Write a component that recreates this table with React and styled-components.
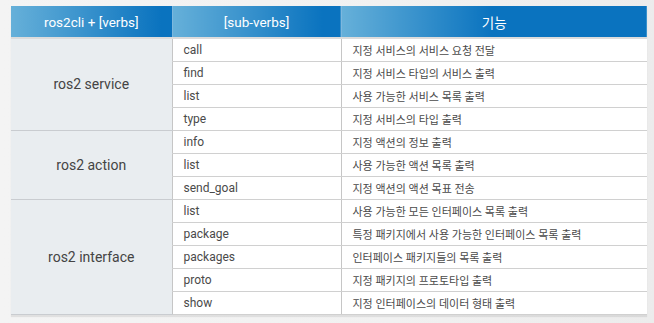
import React from "react";
import styled, { createGlobalStyle } from "styled-components";

const groups = [
  {
    name: "ros2 service",
    rows: [
      ["call", "지정 서비스의 서비스 요청 전달"],
      ["find", "지정 서비스 타입의 서비스 출력"],
      ["list", "사용 가능한 서비스 목록 출력"],
      ["type", "지정 서비스의 타입 출력"],
    ],
  },
  {
    name: "ros2 action",
    rows: [
      ["info", "지정 액션의 정보 출력"],
      ["list", "사용 가능한 액션 목록 출력"],
      ["send_goal", "지정 액션의 액션 목표 전송"],
    ],
  },
  {
    name: "ros2 interface",
    rows: [
      ["list", "사용 가능한 모든 인터페이스 목록 출력"],
      ["package", "특정 패키지에서 사용 가능한 인터페이스 목록 출력"],
      ["packages", "인터페이스 패키지들의 목록 출력"],
      ["proto", "지정 패키지의 프로토타입 출력"],
      ["show", "지정 인터페이스의 데이터 형태 출력"],
    ],
  },
];

const App = () => {
  return (
    <>
      <GlobalStyle />
      <Page>
        <Table>
          <colgroup>
            <col style={{ width: 161 }} />
            <col style={{ width: 169 }} />
            <col style={{ width: 306 }} />
          </colgroup>
          <thead>
            <tr>
              <HeadCell>ros2cli + [verbs]</HeadCell>
              <HeadCell>[sub-verbs]</HeadCell>
              <HeadCell>기능</HeadCell>
            </tr>
          </thead>
          <tbody>
            {groups.map((g) =>
              g.rows.map(([verb, desc], i) => (
                <Row key={g.name + verb}>
                  {i === 0 && (
                    <GroupCell rowSpan={g.rows.length}>{g.name}</GroupCell>
                  )}
                  <VerbCell>{verb}</VerbCell>
                  <DescCell>{desc}</DescCell>
                </Row>
              ))
            )}
          </tbody>
        </Table>
      </Page>
    </>
  );
};

export default App;

const GlobalStyle = createGlobalStyle`
  html, body {
    margin: 0;
    padding: 0;
    background: #f3f3f3;
  }
  body {
    font-family: Roboto, "Noto Sans CJK KR", sans-serif;
  }
`;

const Page = styled.div`
  width: 654px;
  height: 323px;
  padding: 6px 0 0 11px;
  box-sizing: border-box;
  background: linear-gradient(90deg, #f4f4f4 0%, #f1f1f1 60%, #ececec 100%);
`;

const Table = styled.table`
  width: 636px;
  border-collapse: collapse;
  table-layout: fixed;
  background: #fff;
  box-shadow: 0 2px 1px rgba(0, 0, 0, 0.08);
`;

const HeadCell = styled.th`
  height: 31px;
  padding: 0;
  font-size: 13.5px;
  font-weight: 400;
  color: #fff;
  text-align: center;
  background: linear-gradient(90deg, #66b0d9 0px, #0a73bf 150px, #0a73bf 100%);
  border-left: 1px solid rgba(255, 255, 255, 0.35);
  border-bottom: 2px solid #dcdcdc;
  &:first-child {
    border-left: none;
  }
`;

const Row = styled.tr`
  height: 23px;
`;

const GroupCell = styled.td`
  padding: 0;
  background: #e9edf0;
  color: #444;
  font-size: 14px;
  text-align: center;
  border-bottom: 1px solid #c9ccd0;
`;

const VerbCell = styled.td`
  padding: 0 0 0 11px;
  font-size: 12px;
  color: #4a4a4a;
  border-left: 1px solid #c6c6c6;
  border-bottom: 1px solid #d0d0d0;
`;

const DescCell = styled.td`
  padding: 0 0 0 11px;
  font-size: 11px;
  color: #4a4a4a;
  border-left: 1px solid #c6c6c6;
  border-bottom: 1px solid #d0d0d0;
  white-space: nowrap;
`;
